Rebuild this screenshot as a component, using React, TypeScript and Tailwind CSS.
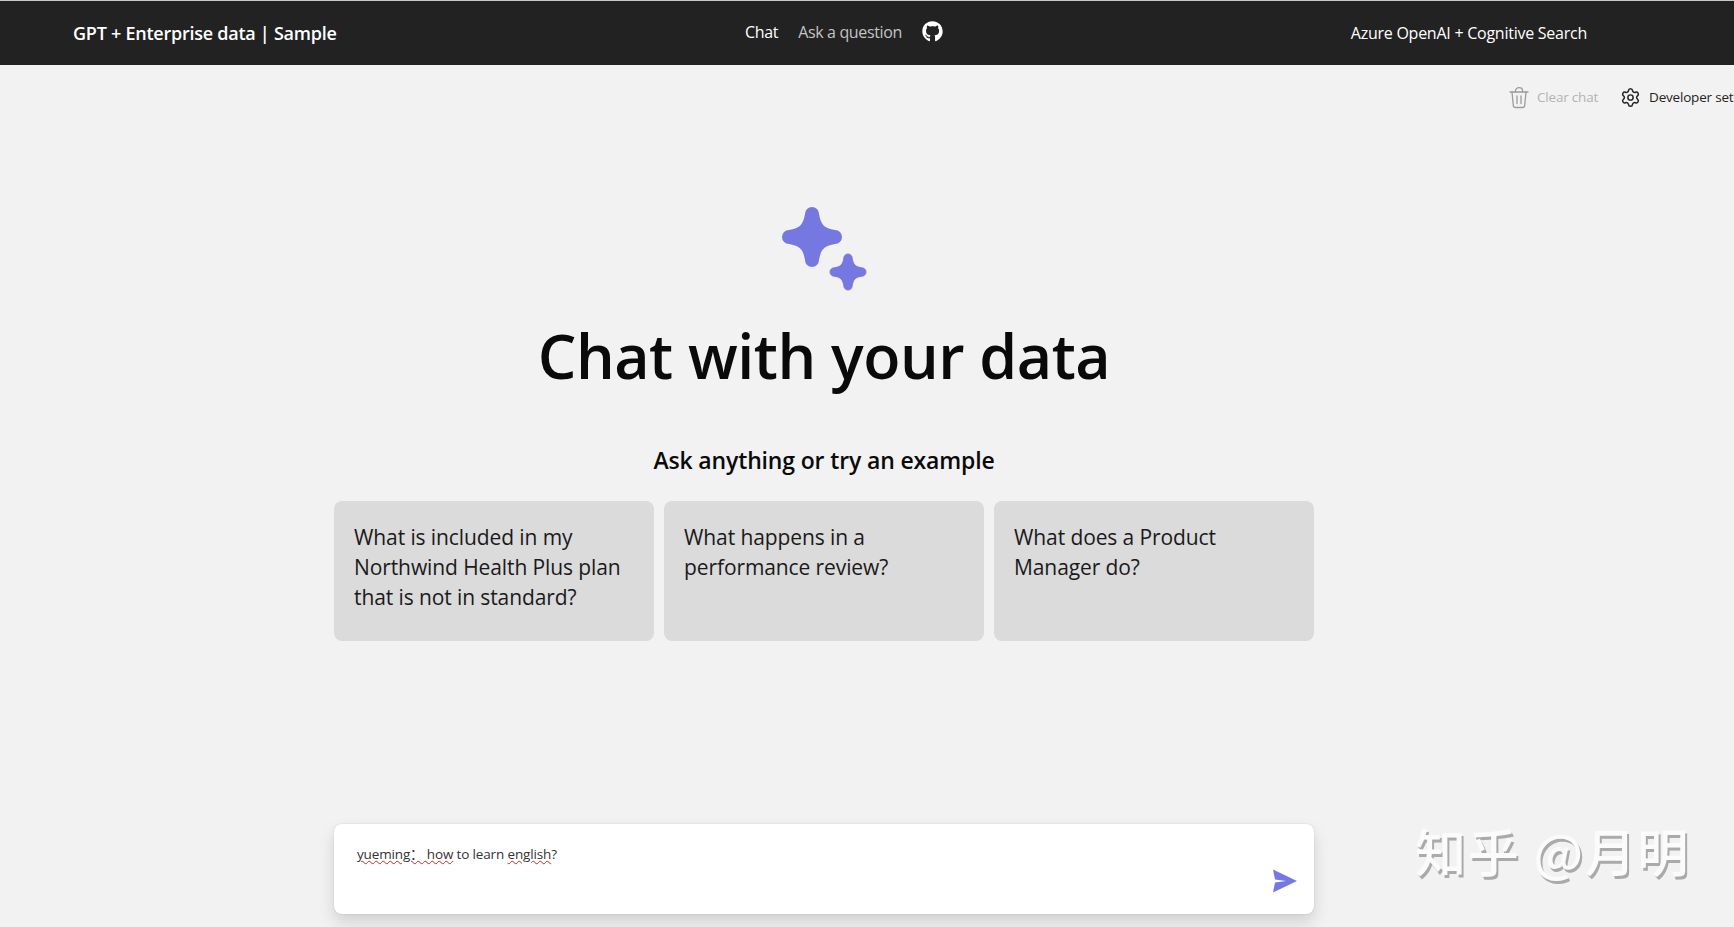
import { Settings } from 'lucide-react';
import { FaGithub } from 'react-icons/fa';

const FONT = "font-['Open_Sans','Noto_Sans_CJK_SC',sans-serif]";

const examples = [
  'What is included in my Northwind Health Plus plan that is not in standard?',
  'What happens in a performance review?',
  'What does a Product Manager do?',
];

function Sparkle() {
  const star = 'M-7,-23 A7 7 0 0 1 7,-23 C9,-12 12,-9 23,-7 A7 7 0 0 1 23,7 C12,9 9,12 7,23 A7 7 0 0 1 -7,23 C-9,12 -12,9 -23,7 A7 7 0 0 1 -23,-7 C-12,-9 -9,-12 -7,-23 Z';
  return (
    <svg width="86" height="86" viewBox="0 0 86 86" fill="#7678e2">
      <path d={star} transform="translate(31,31)" />
      <path d={star} transform="translate(67,66) scale(0.6)" stroke="#7678e2" strokeWidth="1.5" />
    </svg>
  );
}

function TrashIcon() {
  return (
    <svg width="20" height="22" viewBox="0 0 20 22" fill="none" stroke="#9c9c9c" strokeWidth="1.3" strokeLinecap="round" strokeLinejoin="round">
      <path d="M1 5h18" />
      <path d="M6.5 5V3.5a3.5 2.8 0 0 1 7 0V5" />
      <path d="M3 5l1.3 13.5a2.2 2.2 0 0 0 2.2 2h7a2.2 2.2 0 0 0 2.2-2L17 5" />
      <path d="M8 9v7.5M12 9v7.5" />
    </svg>
  );
}

function SendIcon() {
  return (
    <svg width="26" height="24" viewBox="0 0 26 24" fill="#7678e2">
      <path d="M1 0.5 L25 12 L1 23.5 L3 13.6 L14 12 L3 10.4 Z" />
    </svg>
  );
}

export default function App() {
  return (
    <div className={`relative flex h-[927px] flex-col overflow-hidden bg-[#f2f2f2] ${FONT}`}>
      {/* header */}
      <header className="flex h-[65px] shrink-0 items-center justify-between border-t border-[#c8c8c8] bg-[#222222] pl-[73px] pr-[147px] text-white">
        <h3 className="w-[428px] text-[18px] font-semibold tracking-[-0.25px]">GPT + Enterprise data | Sample</h3>
        <nav className="flex items-center gap-5 text-[16px] tracking-[-0.35px]">
          <span className="mb-[2px]">Chat</span>
          <span className="mb-[2px] text-[#c4c4c4]">Ask a question</span>
          <FaGithub className="mb-[3px] size-[21px]" />
        </nav>
        <h4 className="w-[400px] text-right text-[16px] tracking-[-0.25px]">Azure OpenAI + Cognitive Search</h4>
      </header>

      {/* commands */}
      <div className="flex h-[65px] shrink-0 items-center justify-start whitespace-nowrap pl-[1509px] text-[13.5px] tracking-[-0.2px]">
        <div className="flex items-center gap-2 text-[#b3b3b3]">
          <TrashIcon />
          <span>Clear chat</span>
        </div>
        <div className="ml-[22px] flex items-center gap-2 text-[#242424]">
          <Settings className="size-[21px]" strokeWidth={1.7} />
          <span>Developer settings</span>
        </div>
      </div>

      {/* empty state */}
      <main className="flex w-[1648px] flex-col items-center">
        <div className="mt-[76px]">
          <Sparkle />
        </div>
        <h1 className="mt-[24px] text-[61px] font-semibold leading-[80px] tracking-[-0.5px] text-[#0a0a0a]">Chat with your data</h1>
        <h2 className="mt-[48px] text-[23px] font-semibold leading-[32px] tracking-[-0.15px] text-[#0a0a0a]">Ask anything or try an example</h2>
        <div className="mt-[25px] flex gap-[10px]">
          {examples.map(text => (
            <div key={text} className="h-[140px] w-[320px] rounded-lg bg-[#dbdbdb] px-5 pt-[21px] text-[21px] leading-[30px] tracking-[-0.1px] text-[#1a1a1a]">
              {text}
            </div>
          ))}
        </div>
      </main>

      {/* question input */}
      <div className="mt-auto mb-[13px] flex w-[1648px] justify-center">
        <div className="relative h-[90px] w-[980px] rounded-lg bg-white px-[23px] py-[22px] text-[13.5px] leading-[17px] tracking-[-0.15px] text-[#333333] shadow-[0_8px_16px_rgba(0,0,0,0.14),0_0_2px_rgba(0,0,0,0.12)]">
          <span className="underline decoration-[#c62828] decoration-wavy decoration-1">yueming： how</span>
          {' to learn '}
          <span className="underline decoration-[#c62828] decoration-wavy decoration-1">english</span>?
          <div className="absolute bottom-[21px] right-[16px]">
            <SendIcon />
          </div>
        </div>
      </div>

      {/* watermark */}
      <div className="absolute bottom-[47px] left-[1415px] whitespace-nowrap font-['Noto_Sans_CJK_SC',sans-serif] text-[51px] font-medium leading-[60px] tracking-[1.7px] text-[#fbfbfb] [text-shadow:2px_3px_0_#aaaaaa]">
        知乎 @月明
      </div>
    </div>
  );
}
